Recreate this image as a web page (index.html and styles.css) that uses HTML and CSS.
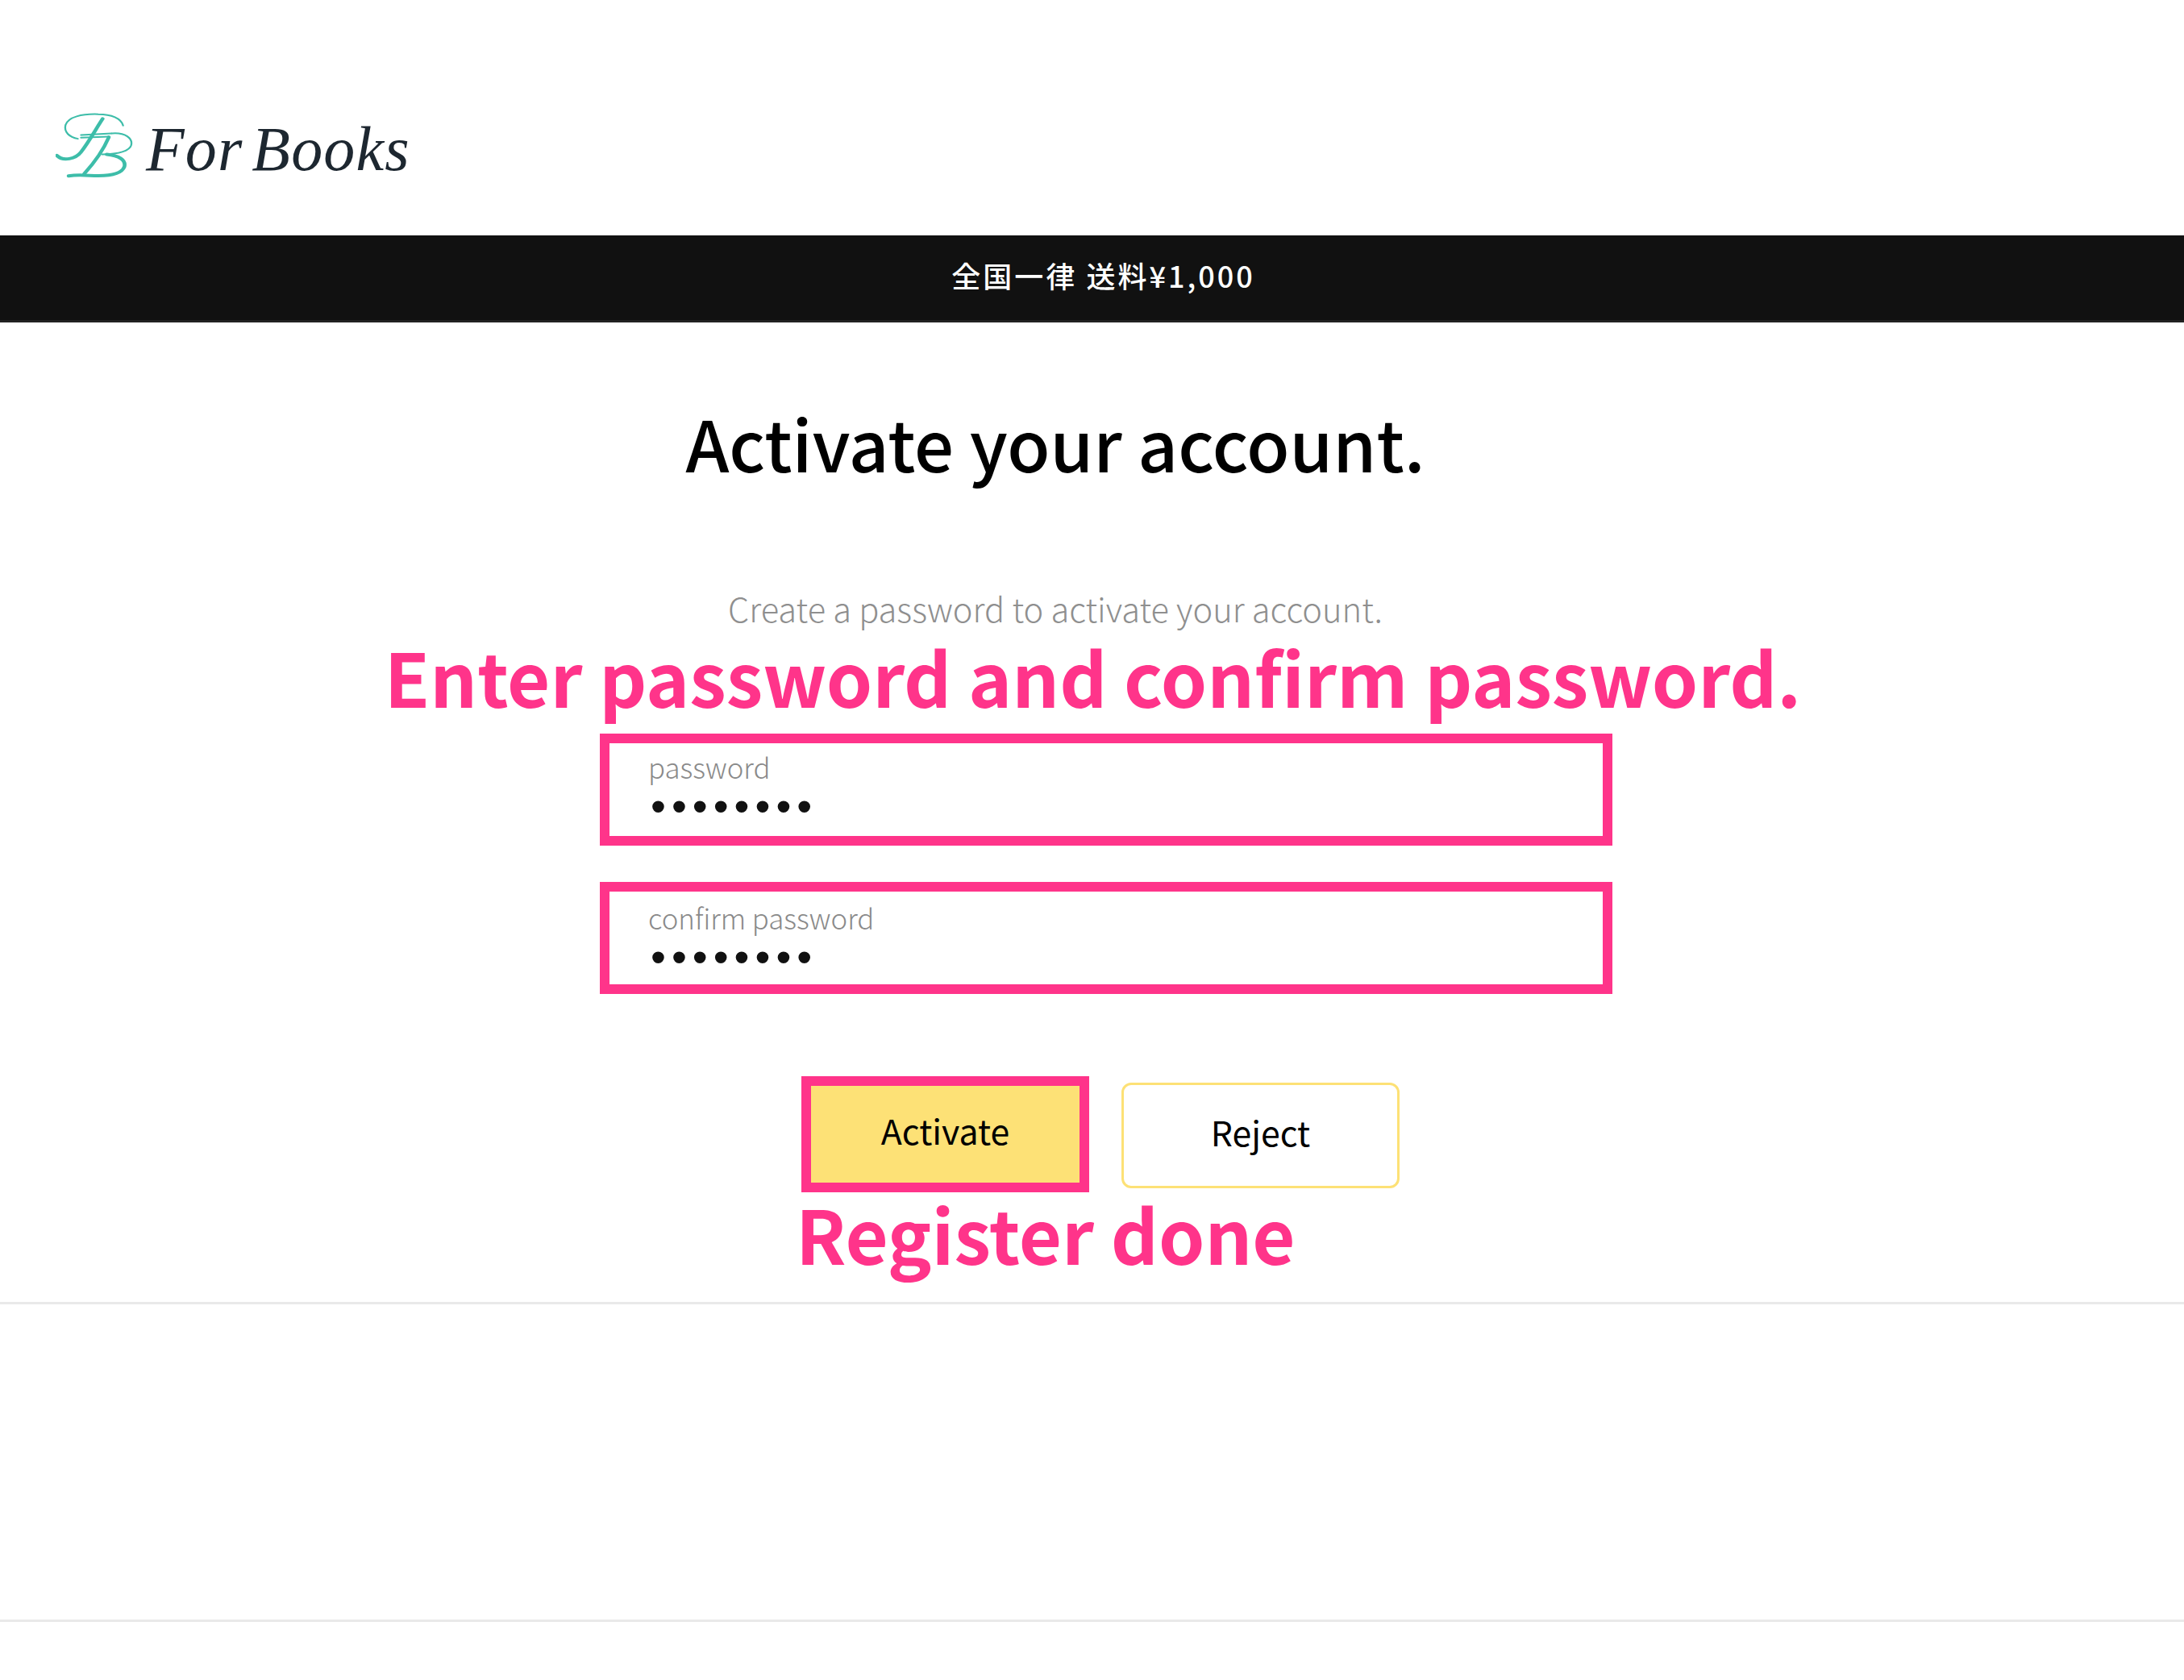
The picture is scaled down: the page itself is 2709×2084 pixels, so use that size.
FILE: index.html
```html
<!DOCTYPE html>
<html>
<head>
    <title>Activate your account</title>
    <link rel="stylesheet" href="styles.css">
</head>
<body>
    <header class="site-header">
        <a class="logo" href="#">
            <svg class="logo-mark" viewBox="180 150 250 245" width="96" height="82" preserveAspectRatio="none">
                <path class="thin" d="M398 197C392 170 360 155 318 155C265 153 220 165 212 195C206 222 225 240 252 246"/>
                <path class="thick" d="M332 172C310 210 285 262 262 295C245 320 205 332 184 308"/>
                <path class="thin" d="M262 232L360 226M262 242L350 238"/>
                <path class="thick" d="M352 240C335 285 305 335 272 376"/>
                <path class="thin" d="M362 226C405 222 430 245 424 270C418 292 385 302 330 304"/>
                <path class="thick" d="M345 304C385 308 408 325 402 350C392 380 345 386 290 382C265 380 240 380 222 384"/>
            </svg>
            <span class="logo-name">For Books</span>
        </a>
    </header>
    <div class="notice">全国一律 送料¥1,000</div>

    <main class="activate">
        <h1>Activate your account.</h1>
        <p class="lead">Create a password to activate your account.</p>
        <p class="note note-fields">Enter password and confirm password.</p>
        <div class="field">
            <label for="password">password</label>
            <input id="password" type="password" value="12345678">
        </div>
        <div class="field field-confirm">
            <label for="confirm-password">confirm password</label>
            <input id="confirm-password" type="password" value="12345678">
        </div>
        <div class="actions">
            <button class="btn btn-activate">Activate</button>
            <button class="btn btn-reject">Reject</button>
        </div>
        <p class="note note-done">Register done</p>
    </main>

    <div class="footer-band"></div>
</body>
</html>
```

FILE: styles.css
```css
* {
    box-sizing: border-box;
}

html,
body {
    margin: 0;
    background-color: #fff;
}

body {
    height: 2084px;
    overflow: hidden;
    font-family: "Noto Sans CJK JP", "Noto Sans", sans-serif;
    color: #000;
}

.site-header {
    display: flex;
    align-items: flex-end;
    height: 292px;
    padding: 0 0 70px 69px;
}

.logo {
    display: flex;
    align-items: flex-end;
    gap: 16px;
    color: #1d2730;
    text-decoration: none;
}

.logo-mark {
    display: block;
    fill: none;
    stroke: #3dbda9;
    stroke-linecap: round;
}

.logo-mark .thin {
    stroke-width: 6;
}

.logo-mark .thick {
    stroke-width: 12;
}

.logo-name {
    font-family: "Liberation Serif", serif;
    font-style: italic;
    font-size: 78px;
    line-height: 74px;
    letter-spacing: 1.2px;
    word-spacing: -10px;
}

.notice {
    height: 108px;
    padding-left: 28px;
    border-bottom: 3px solid #222;
    background-color: #111;
    color: #fff;
    font-size: 36px;
    font-weight: 500;
    line-height: 98px;
    text-align: center;
    letter-spacing: 3px;
}

.activate {
    display: flex;
    flex-direction: column;
    height: 1218px;
    border-bottom: 3px solid #e9e9e9;
}

h1 {
    margin: 98px 91px 0 0;
    font-size: 86.7px;
    font-weight: 500;
    line-height: 100px;
    text-align: center;
}

.lead {
    margin: 128px 91px 0 0;
    color: #8f8f8f;
    font-size: 41.6px;
    font-weight: 300;
    line-height: 56px;
    text-align: center;
}

.note {
    margin: 0;
    color: #ff348a;
    font-size: 91.8px;
    font-weight: 700;
    line-height: 112px;
}

.note-fields {
    padding-left: 2px;
    text-align: center;
}

.field {
    width: 1256px;
    height: 139px;
    margin: 16px 0 29px 744px;
    padding: 4px 0 0 48px;
    border: 12px solid #ff348a;
}

.field-confirm {
    padding-top: 7px;
}

.field label {
    display: block;
    color: #8a8a8a;
    font-size: 34.8px;
    font-weight: 300;
    line-height: 50px;
}

.field input {
    display: block;
    width: 600px;
    height: 47px;
    padding: 0 0 0 3px;
    border: 0;
    outline: 0;
    background: none;
    color: #111;
    font-family: "Liberation Sans", sans-serif;
    font-size: 54px;
    letter-spacing: 7px;
}

.actions {
    display: flex;
    align-items: flex-start;
    gap: 40px;
    margin: 73px 0 0 994px;
}

.btn {
    padding: 0 0 12px;
    font-family: inherit;
    font-size: 42.8px;
    color: #000;
    cursor: pointer;
}

.btn-activate {
    width: 357px;
    height: 144px;
    border: 12px solid #ff348a;
    background-color: #fde176;
}

.btn-reject {
    width: 345px;
    height: 131px;
    margin-top: 8px;
    border: 3px solid #fde176;
    border-radius: 12px;
    background-color: #fff;
}

.note-done {
    margin: -6px 0 0 987px;
}

.footer-band {
    height: 394px;
    border-bottom: 3px solid #e9e9e9;
}
```
